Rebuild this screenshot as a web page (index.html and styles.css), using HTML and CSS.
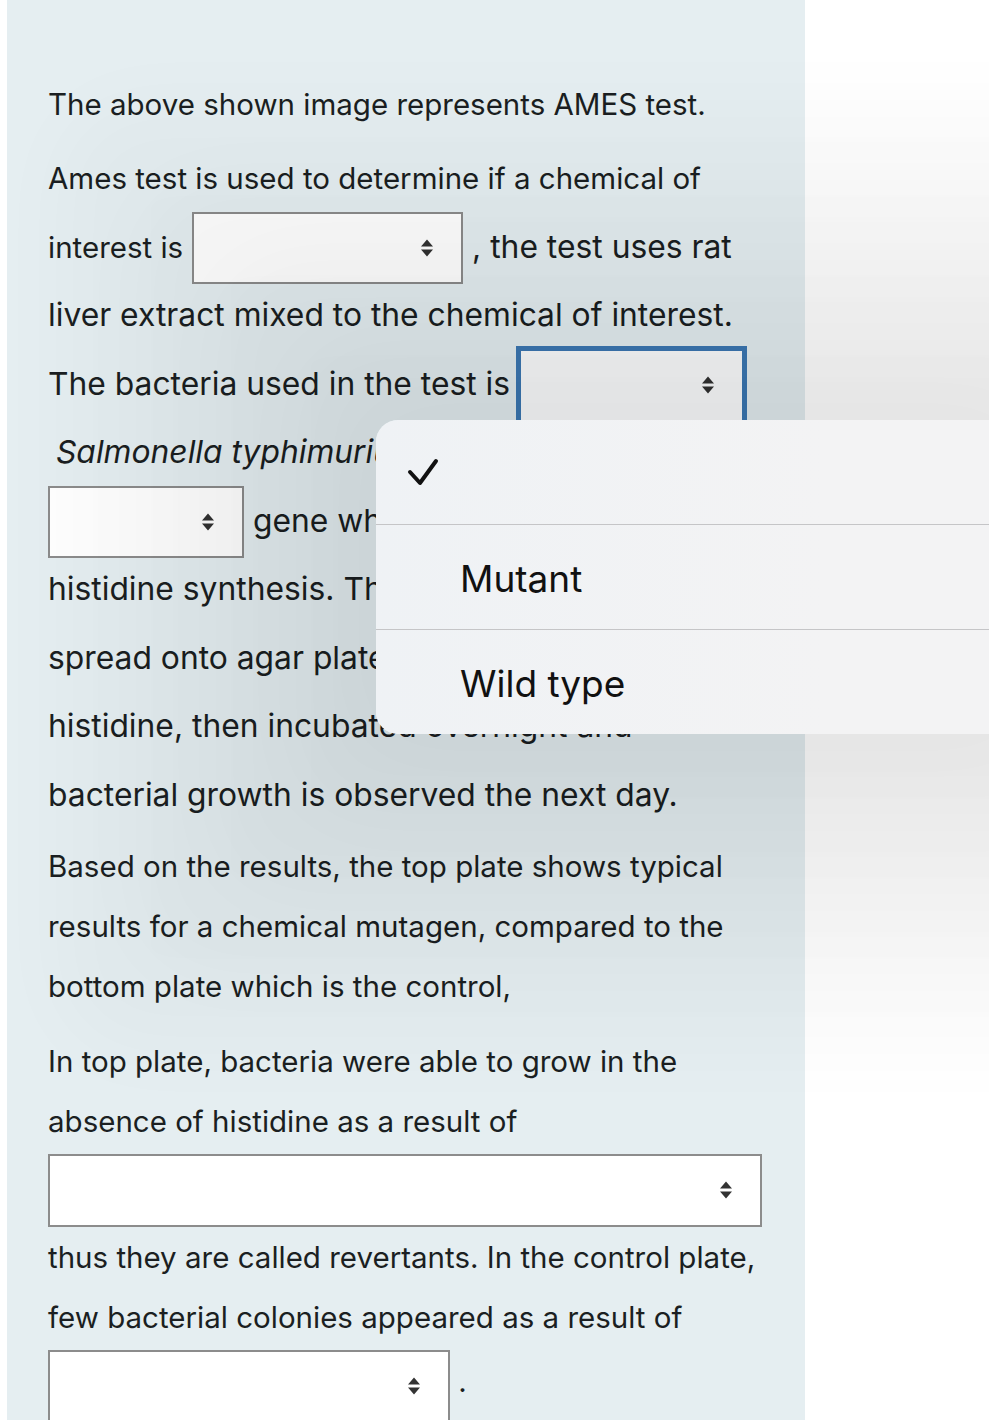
FILE: index.html
```html
<!DOCTYPE html>
<html lang="en">
<head>
<meta charset="utf-8">
<title>AMES test</title>
<link rel="stylesheet" href="styles.css">
</head>
<body>
<div class="page">
  <main class="panel">
    <p class="intro">The above shown image represents AMES test.</p>
    <p class="q q1"><span class="small">Ames test is used to determine if a chemical of</span><br>
      <span class="small">interest is</span> <span class="sel w1"><svg class="arr" viewBox="0 0 14 20" width="14" height="20"><path d="M1 8.5 L7 1.5 L13 8.5 Z M1 11.5 L13 11.5 L7 18.5 Z"/></svg></span> , the test uses rat<br>
      liver extract mixed to the chemical of interest.<br>
      The bacteria used in the test is <span class="sel w2 focus"><svg class="arr" viewBox="0 0 14 20" width="14" height="20"><path d="M1 8.5 L7 1.5 L13 8.5 Z M1 11.5 L13 11.5 L7 18.5 Z"/></svg></span><br>
      <em class="species">Salmonella typhimurium</em><br>
      <span class="sel w3"><svg class="arr" viewBox="0 0 14 20" width="14" height="20"><path d="M1 8.5 L7 1.5 L13 8.5 Z M1 11.5 L13 11.5 L7 18.5 Z"/></svg></span> gene which<br>
      histidine synthesis. The<br>
      spread onto agar plates<br>
      histidine, then incubated overnight and<br>
      bacterial growth is observed the next day.</p>
    <p class="q q2">Based on the results, the top plate shows typical<br>
      results for a chemical mutagen, compared to the<br>
      bottom plate which is the control,</p>
    <p class="q q3">In top plate, bacteria were able to grow in the<br>
      absence of histidine as a result of<br>
      <span class="sel w4"><svg class="arr" viewBox="0 0 14 20" width="14" height="20"><path d="M1 8.5 L7 1.5 L13 8.5 Z M1 11.5 L13 11.5 L7 18.5 Z"/></svg></span><br>
      thus they are called revertants. In the control plate,<br>
      few bacterial colonies appeared as a result of<br>
      <span class="sel w5 last"><svg class="arr" viewBox="0 0 14 20" width="14" height="20"><path d="M1 8.5 L7 1.5 L13 8.5 Z M1 11.5 L13 11.5 L7 18.5 Z"/></svg></span> <span class="dot">.</span></p>
  </main>

  <div class="picker">
    <div class="opt opt-check">
      <svg class="check" viewBox="0 0 32 28" width="32" height="28"><polyline points="3,14 13,25 29,3"/></svg>
    </div>
    <div class="opt">Mutant</div>
    <div class="opt">Wild type</div>
  </div>
</div>
</body>
</html>
```

FILE: styles.css
```css
html, body {
  margin: 0;
  padding: 0;
  background: #ffffff;
}

body {
  font-family: Inter, "Liberation Sans", "DejaVu Sans", sans-serif;
  color: #1b1f22;
}

.page {
  position: relative;
  width: 989px;
  height: 1420px;
  overflow: hidden;
}

.panel {
  display: block;
  box-sizing: border-box;
  margin-left: 7px;
  width: 798px;
  min-height: 1420px;
  padding: 74px 0 0 41px;
  background: #e5eef1;
  font-size: 29.5px;
  white-space: nowrap;
}

.panel p {
  margin: 0;
}

.intro {
  line-height: 60px;
}

.panel .q1 {
  font-size: 31.8px;
  line-height: 68.5px;
  margin-top: 10px;
}

.small {
  font-size: 29.5px;
}

.panel .q2 {
  line-height: 60px;
  margin-top: 6.5px;
}

.panel .q3 {
  line-height: 60px;
  margin-top: 15px;
}

.species {
  font-style: italic;
  margin-left: 8px;
}

/* select boxes */
.sel {
  display: inline-block;
  box-sizing: border-box;
  height: 72px;
  border: 2px solid #8c8c8c;
  background: #ffffff;
  overflow: hidden;
}

.q1 .sel {
  vertical-align: -22.5px;
  margin: -4px 0;
}

.q1 .sel.focus {
  height: 76px;
  margin: -4px 0 -8px;
  vertical-align: -22px;
}

.q3 .sel {
  vertical-align: top;
  height: 73px;
  margin-top: 3.5px;
}

.q3 .sel.last {
  height: 72px;
  margin-top: 2.5px;
}

.dot {
  display: inline-block;
  vertical-align: -4px;
}

.w1 { width: 271px; }
.w2 { width: 225px; }
.w3 { width: 196px; }
.w4 { width: 714px; }
.w5 { width: 402px; }

.sel.focus {
  border-color: #3d78b4;
  outline: 3px solid #3d78b4;
  background: #fbfcfd;
}

.arr {
  display: block;
  margin: 24px 27px 0 auto;
  fill: #333333;
}

/* iOS style picker menu */
.picker {
  position: absolute;
  left: 376px;
  top: 420px;
  width: 640px;
  border-radius: 22px;
  background: linear-gradient(90deg, #eff2f5 0%, #f3f3f4 70%);
  box-shadow:
    0 0 80px 0 rgba(0, 0, 0, 0.022),
    0 0 80px 80px rgba(0, 0, 0, 0.022),
    0 0 80px 160px rgba(0, 0, 0, 0.022),
    0 0 80px 240px rgba(0, 0, 0, 0.022),
    0 0 80px 320px rgba(0, 0, 0, 0.022);
  font-size: 37px;
  color: #111111;
}

.opt {
  display: flex;
  align-items: center;
  height: 104px;
  padding-left: 84px;
  padding-top: 2px;
  box-sizing: border-box;
}

.opt + .opt {
  height: 105px;
  border-top: 1px solid #c5c5c7;
}

.opt-check {
  padding-left: 31px;
  padding-top: 0;
}

.check {
  display: block;
  fill: none;
  stroke: #111111;
  stroke-width: 4;
  stroke-linecap: round;
  stroke-linejoin: round;
}
```
